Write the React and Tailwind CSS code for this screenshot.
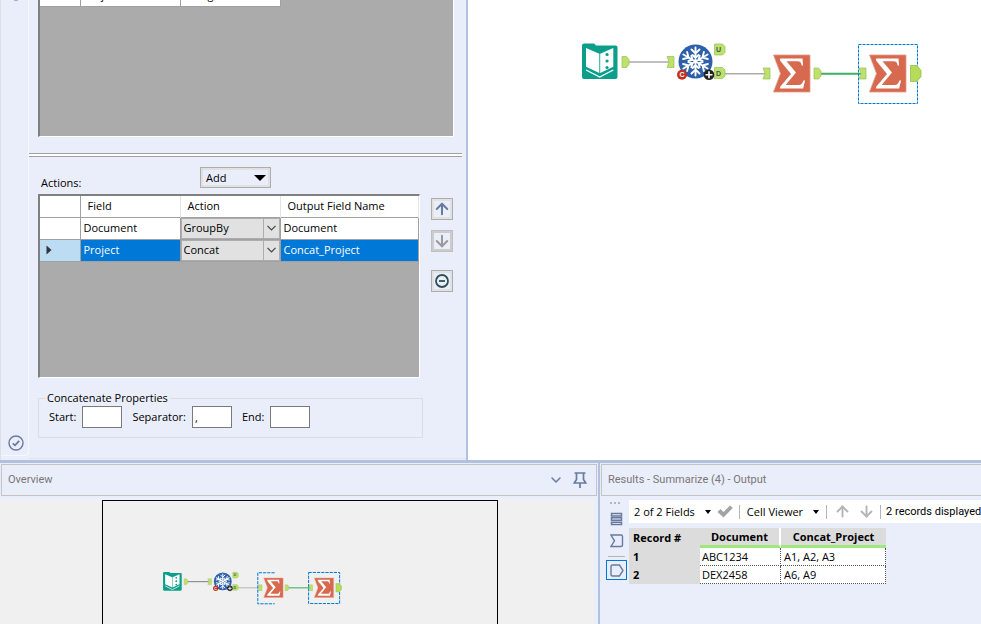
import { useState } from "react"
import { ArrowDown, ArrowUp, ChevronDown } from "lucide-react"

const actionRows = [
    { field: "Document", action: "GroupBy", output: "Document" },
    { field: "Project", action: "Concat", output: "Concat_Project" },
]

const results = [
    { document: "ABC1234", projects: "A1, A2, A3" },
    { document: "DEX2458", projects: "A6, A9" },
]

function SummarizeTool({ x }) {
    return (
        <g transform={`translate(${x} 19)`}>
            <path d="M0 0H36.5V37H0L7 18.5Z" fill="#d7694f" stroke="#e59a88" strokeWidth="0.8" />
            <path
                d="M6.5 3.5H29L29.6 10.5H28.2C27.6 7.5 26.8 6.300 24 6.300H13L22.500 17.500L12.200 30H25C28 30 29 28 30 25.5H31.6L29.6 33.5H6.5V32L17.5 19L6.5 5.5Z"
                fill="#fff"
            />
        </g>
    )
}

function OutAnchor({ x, y }) {
    return (
        <path
            d={`M${x} ${y}h4.5l2.5 3v5l-2.5 3h-4.5z`}
            fill="#bfe06a"
            stroke="#96c25a"
            strokeWidth="0.7"
        />
    )
}

function InAnchor({ x, y }) {
    return (
        <path
            d={`M${x} ${y}h7v11h-7l2 -5.5z`}
            fill="#bfe06a"
            stroke="#96c25a"
            strokeWidth="0.7"
        />
    )
}

function LetterAnchor({ y, letter }) {
    return (
        <g>
            <path
                d={`M138.500 ${y}h8l2.500 2.500v6l-2.500 2.500h-8z`}
                fill="#bfe06a"
                stroke="#96c25a"
                strokeWidth="0.7"
            />
            <text
                x="142.500"
                y={y + 8}
                textAnchor="middle"
                fontFamily="Liberation Sans, sans-serif"
                fontSize="7"
                fontWeight="700"
                fill="#2f5b56"
            >
                {letter}
            </text>
        </g>
    )
}

function Workflow({ className, wire, overview }) {
    return (
        <svg viewBox="0 0 350 76" className={className} fill="none">
            <path d="M53 26H93" stroke={wire} strokeWidth="1.600" />
            <path d="M149 37.700H189" stroke="#aaa" strokeWidth="1.600" />
            <path d="M244 37.700H286" stroke="#3fae66" strokeWidth="2" />

            {/* input data */}
            <path
                d="M6 9.500Q6 7.500 8 7.500H18L20 9.500H39.500Q41.500 9.500 41.500 11.500V41Q41.500 43 39.500 43H8Q6 43 6 41Z"
                fill="#0b9f8b"
            />
            <path d="M10 12L23.300 17.800V37L10 30.700ZM37.300 12L24.200 17.800V37L37.300 30.700Z" fill="#fff" />
            <path d="M11.500 33L23.700 39.300L36 33" stroke="#0b9f8b" strokeWidth="1.200" />
            <path d="M10 34L23.700 41L37.300 34" stroke="#fff" strokeWidth="1.400" />
            <path d="M31 18.500h.1M31 25h.1M31 31.500h.1" stroke="#0b9f8b" strokeWidth="3.200" strokeLinecap="round" />
            <OutAnchor x={46} y={20.5} />

            {/* data cleansing */}
            <InAnchor x={91} y={20.5} />
            <circle cx="119.500" cy="25.500" r="17" fill="#2d60a9" />
            <g stroke="#fff" strokeWidth="1.900" strokeLinecap="round">
                {[0, 60, 120, 180, 240, 300].map((angle) => (
                    <path
                        key={angle}
                        transform={`rotate(${angle} 119.500 25.500)`}
                        d="M119.500 25.500V11.500M115.500 13.500L119.500 17.500L123.500 13.500M116.500 19L119.500 22L122.500 19"
                    />
                ))}
            </g>
            <circle cx="106" cy="38.700" r="5" fill="#c3311f" />
            <text
                x="106"
                y="41.300"
                textAnchor="middle"
                fontFamily="Liberation Sans, sans-serif"
                fontSize="7"
                fontWeight="700"
                fill="#fff"
            >
                C
            </text>
            <LetterAnchor y={8} letter="U" />
            <LetterAnchor y={31.5} letter="D" />
            <circle cx="133" cy="38.700" r="5.300" fill="#222" />
            <path d="M133 35.200v7M129.500 38.700h7" stroke="#fff" strokeWidth="1.600" />

            <InAnchor x={187} y={32} />
            <SummarizeTool x={197.5} />
            <OutAnchor x={238} y={32} />

            {overview && (
                <path d="M218 9H186V68H218" stroke="#0078d7" strokeWidth="1.900" strokeDasharray="6 2" />
            )}
            <rect
                x="282.500"
                y="8.500"
                width="59"
                height="59"
                stroke="#0078d7"
                strokeWidth={overview ? 1.9 : 1}
                strokeDasharray={overview ? "6 2" : "3 1"}
            />
            <InAnchor x={283} y={32} />
            <SummarizeTool x={293.5} />
            <path d="M334.500 29.500h6.500l4 5v6l-4 5h-6.500z" fill="#b5db58" stroke="#8fbf52" strokeWidth="0.8" />
        </svg>
    )
}

function SideButton({ label, disabled, children }) {
    return (
        <button
            aria-label={label}
            disabled={disabled}
            className="w-[22px] h-[22px] flex items-center justify-center border border-[#adadad] bg-[#eaeefa] ring-2 ring-inset ring-[#e1e1e1] disabled:border-[#bfbfbf] disabled:ring-[#cccccc]"
        >
            {children}
        </button>
    )
}

function PropertyInput({ id, label, initial }) {
    const [value, setValue] = useState(initial)

    return (
        <div className="flex items-center gap-1.5">
            <label htmlFor={id}>{label}</label>
            <input
                id={id}
                value={value}
                onChange={(e) => setValue(e.target.value)}
                className="w-10 h-[22px] px-0.5 bg-white border border-[#7a7a7a]"
            />
        </div>
    )
}

function ActionsTable() {
    return (
        <table className="w-full table-fixed border-collapse text-left">
            <thead>
                <tr className="h-[21px] bg-white border-b border-[#a0a0a0]">
                    <th aria-label="Selected row" className="w-10 p-0 border-r border-[#a0a0a0]"></th>
                    <th className="w-[100px] p-0 pl-[7px] font-normal border-r border-[#e3e3e3]">Field</th>
                    <th className="w-[100px] p-0 pl-[7px] font-normal border-r border-[#e3e3e3]">Action</th>
                    <th className="p-0 pl-[7px] font-normal border-r border-[#e3e3e3]">Output Field Name</th>
                </tr>
            </thead>
            <tbody>
                {actionRows.map((row, i) => (
                    <tr
                        key={row.field}
                        className={
                            i === 1
                                ? "h-[22px] bg-[#0078d7] text-white border-b border-[#a0a0a0]"
                                : "h-[22px] bg-white border-b border-[#a0a0a0]"
                        }
                    >
                        <td className={i === 1 ? "p-0 pl-1.5 bg-[#bcdcf4] border-r border-[#a0a0a0]" : "p-0 border-r border-[#a0a0a0]"}>
                            {i === 1 && (
                                <svg viewBox="0 0 6 10" className="w-1.5 h-2.5">
                                    <path d="M0.500 0.500L5.500 5L0.500 9.500Z" fill="#333" />
                                </svg>
                            )}
                        </td>
                        <td className="p-0 pl-[3px] border-r border-[#a0a0a0]">{row.field}</td>
                        <td className="p-0 border-r border-[#a0a0a0]">
                            <div className="relative text-black">
                                <select
                                    aria-label={`Action for ${row.field}`}
                                    defaultValue={row.action}
                                    className="block w-full h-[21px] pl-0.5 appearance-none bg-[#e1e1e1] border border-[#adadad]"
                                >
                                    <option>GroupBy</option>
                                    <option>Concat</option>
                                </select>
                                <span className="absolute right-0 inset-y-0 w-[17px] flex items-center justify-center border-l border-[#adadad] pointer-events-none">
                                    <svg viewBox="0 0 9 6" className="w-[9px] h-1.5" fill="none" stroke="#444" strokeWidth="1.200">
                                        <path d="M0.500 0.800L4.500 4.800L8.500 0.800" />
                                    </svg>
                                </span>
                            </div>
                        </td>
                        <td className="p-0 pl-[3px] border-r border-[#a0a0a0]">{row.output}</td>
                    </tr>
                ))}
            </tbody>
        </table>
    )
}

function ConfigPanel() {
    return (
        <section className="w-[468px] shrink-0 flex border-l border-r-2 border-l-[#dcdfe6] border-r-[#b0c0e0]">
            <div className="w-7 shrink-0 flex flex-col items-center justify-between mb-1 pb-1 pl-[3px] border-r border-b border-[#f6f8fd] rounded-br">
                <span className="w-1 h-px bg-[#a9b3cc]"></span>
                <svg viewBox="0 0 16 16" className="w-4 h-4" fill="none" stroke="#687b9f" strokeWidth="1.400">
                    <circle cx="8" cy="8" r="7" />
                    <path d="M4.800 8.300L7 10.300L11.200 5.800" strokeWidth="1.800" />
                </svg>
            </div>

            <div className="flex-1 flex flex-col border-b border-[#e3e3e3] mb-px">
                <div className="h-[137px] ml-[9px] mr-3 bg-[#ababab] border-l-2 border-b border-r border-l-[#808080] border-b-white border-r-white">
                    <div className="h-[7px] flex items-end overflow-hidden">
                        <table className="table-fixed w-[241px] border-collapse bg-white">
                            <tbody>
                                <tr className="h-[22px] border-b border-[#a0a0a0]">
                                    <td className="w-10 p-0 border-r border-[#a0a0a0]"></td>
                                    <td className="w-[100px] p-0 pl-[3px] border-r border-[#a0a0a0]">Project</td>
                                    <td className="p-0 pl-[3px] border-r border-[#a0a0a0]">String</td>
                                </tr>
                            </tbody>
                        </table>
                    </div>
                </div>

                <div className="mt-4 mr-1 h-1 border-y border-[#a0a0a0] bg-white"></div>

                <div className="mt-2.5 ml-3 flex items-start">
                    <span className="w-[159px] pt-2">Actions:</span>
                    <button className="w-[71px] h-[21px] flex items-center justify-between pl-[5px] pr-1 border border-[#adadad] ring-2 ring-inset ring-[#e1e1e1]">
                        Add
                        <svg viewBox="0 0 12 6" className="w-3 h-1.5">
                            <path d="M0 0H12L6 6Z" />
                        </svg>
                    </button>
                </div>

                <div className="mt-[3px] ml-[9px] flex gap-[11px]">
                    <div className="w-[382px] h-[184px] bg-[#ababab] border-t-2 border-l-2 border-b border-r border-t-[#808080] border-l-[#808080] border-r-white border-b-white">
                        <ActionsTable />
                    </div>
                    <div className="flex flex-col gap-2.5 pt-1">
                        <SideButton label="Move up">
                            <ArrowUp size={18} strokeWidth={2.7} color="#687b9f" />
                        </SideButton>
                        <SideButton label="Move down" disabled>
                            <ArrowDown size={18} strokeWidth={2.7} color="#9a9a9a" />
                        </SideButton>
                        <div className="pt-2">
                            <SideButton label="Remove">
                                <svg viewBox="0 0 14 14" className="w-3.5 h-3.5" fill="none" stroke="#2f4f56" strokeWidth="1.800">
                                    <circle cx="7" cy="7" r="6" />
                                    <path d="M4 7H10" />
                                </svg>
                            </SideButton>
                        </div>
                    </div>
                </div>

                <fieldset className="mt-3 ml-[9px] w-[385px] h-12 px-2.5 border border-[#dcdcdc]">
                    <legend className="-ml-1 px-0.5 leading-4">Concatenate Properties</legend>
                    <div className="flex gap-2.5">
                        <PropertyInput id="start" label="Start:" initial="" />
                        <PropertyInput id="separator" label="Separator:" initial="," />
                        <PropertyInput id="end" label="End:" initial="" />
                    </div>
                </fieldset>
                <div className="h-5"></div>
            </div>
        </section>
    )
}

function Overview() {
    return (
        <section className="w-[600px] shrink-0 flex flex-col pt-px border-r-2 border-[#b0c0e0]">
            <header className="h-8 ml-px mr-px flex items-center gap-2 pl-1.5 pr-2 border border-[#c3c3c3]">
                <h2 className="flex-1 font-['Roboto',sans-serif] text-[#777]">Overview</h2>
                <button aria-label="Panel options">
                    <ChevronDown size={16} strokeWidth={2.2} color="#687b9f" />
                </button>
                <button aria-label="Pin panel">
                    <svg viewBox="0 0 16 18" className="w-4 h-[18px]" fill="none" stroke="#687b9f" strokeWidth="1.700">
                        <path d="M2.500 2H13.500M4.500 2V8.500L2.300 12H13.700L11.500 8.500V2M8 12V17" />
                    </svg>
                </button>
            </header>
            <div className="mt-[3px] mr-1 flex-1 bg-[#f0f0f0] pt-px pl-1.5 flex justify-center">
                <div className="relative w-[396px] border border-b-0 border-black">
                    <Workflow overview wire="#666" className="absolute left-14 top-[67px] w-[186px] h-10" />
                </div>
            </div>
        </section>
    )
}

function Results() {
    return (
        <section className="flex-1 min-w-0 flex flex-col pt-px">
            <header className="h-8 ml-px shrink-0 flex items-center pl-1.5 border border-r-0 border-[#c3c3c3]">
                <h2 className="font-['Roboto',sans-serif] text-[#777]">Results - Summarize (4) - Output</h2>
            </header>
            <div className="flex-1 flex pl-1.5 pt-1">
                <div className="w-[23px] shrink-0 flex flex-col items-start">
                    <span className="ml-1 mt-0.5 flex gap-0.5">
                        <i className="w-0.5 h-0.5 bg-[#b5b5b5]"></i>
                        <i className="w-0.5 h-0.5 bg-[#b5b5b5]"></i>
                        <i className="w-0.5 h-0.5 bg-[#b5b5b5]"></i>
                    </span>
                    <button aria-label="Messages" className="ml-1 mt-2">
                        <svg viewBox="0 0 13 14" className="block w-[13px] h-3.5" fill="none" stroke="#687b9f" strokeWidth="1.500">
                            <path d="M1.500 1.500H11.500V4H1.500ZM1.500 5.800H11.500V8.300H1.500ZM1.500 10.200H11.500V12.500H1.500Z" />
                        </svg>
                    </button>
                    <button aria-label="Input anchor" className="ml-1 mt-2">
                        <svg viewBox="0 0 14 14" className="block w-3.5 h-3.5" fill="none" stroke="#687b9f" strokeWidth="1.400">
                            <path d="M1 1H11Q12.500 1 12.500 2.500V11Q12.500 12.500 11 12.500H1L4.500 6.800Z" />
                        </svg>
                    </button>
                    <span className="ml-0.5 mt-2 w-[17px] h-px bg-[#b5b5b5]"></span>
                    <button
                        aria-label="Output anchor"
                        className="mt-[3px] w-[21px] h-5 flex items-center justify-center border border-[#0078d7]"
                    >
                        <svg viewBox="0 0 14 13" className="w-3.5 h-[13px]" fill="none" stroke="#687b9f" strokeWidth="1.400">
                            <path d="M2.500 1H9.500L13 6.500L9.500 12H2.500Q1 12 1 10.500V2.500Q1 1 2.500 1Z" />
                        </svg>
                    </button>
                </div>

                <div className="flex-1 min-w-0 text-black">
                    <div className="h-[23px] flex items-center pl-[5px] bg-white whitespace-nowrap overflow-hidden">
                        <button className="flex items-center gap-2.5">
                            2 of 2 Fields
                            <svg viewBox="0 0 6 4" className="w-1.5 h-1">
                                <path d="M0 0H6L3 4Z" />
                            </svg>
                        </button>
                        <button aria-label="Apply" className="ml-1.5">
                            <svg viewBox="0 0 16 13" className="w-4 h-[13px]">
                                <path d="M0.500 7L3.500 4L6.500 7L13 0.500L15.800 3L6.500 12.500Z" fill="#a3a3a3" />
                            </svg>
                        </button>
                        <span className="ml-1.5 mr-[7px] w-px h-3.5 shrink-0 bg-[#b5b5b5]"></span>
                        <button className="flex items-center gap-2.5">
                            Cell Viewer
                            <svg viewBox="0 0 6 4" className="w-1.5 h-1">
                                <path d="M0 0H6L3 4Z" />
                            </svg>
                        </button>
                        <span className="mx-[7px] w-px h-3.5 shrink-0 bg-[#b5b5b5]"></span>
                        <button aria-label="Previous record">
                            <ArrowUp size={17} strokeWidth={2.7} color="#b5b5b5" />
                        </button>
                        <button aria-label="Next record" className="ml-[7px]">
                            <ArrowDown size={17} strokeWidth={2.7} color="#b5b5b5" />
                        </button>
                        <span className="mx-[5px] w-px h-3.5 shrink-0 bg-[#b5b5b5]"></span>
                        <span className="font-['Roboto',sans-serif]">2 records displayed</span>
                    </div>

                    <table className="mt-[5px] w-[257px] table-fixed border-separate border-spacing-0 text-left">
                        <thead>
                            <tr className="h-5">
                                <th className="w-[71px] p-0 pl-1 bg-[#dcdcdc]">Record #</th>
                                <th className="w-[81px] p-0 text-center bg-[#dcdcdc] border-b-3 border-b-[#9fe87c] border-r-2 border-r-white">
                                    Document
                                </th>
                                <th className="p-0 text-center bg-[#dcdcdc] border-b-3 border-b-[#9fe87c]">Concat_Project</th>
                            </tr>
                        </thead>
                        <tbody>
                            {results.map((row, i) => (
                                <tr key={row.document} className="h-[18px] bg-white">
                                    <th className="p-0 pl-1 bg-[#dcdcdc]">{i + 1}</th>
                                    <td className="p-0 pl-0.5 border-r border-b border-dotted border-[#555]">{row.document}</td>
                                    <td className="p-0 pl-[3px] border-r border-b border-dotted border-[#555]">{row.projects}</td>
                                </tr>
                            ))}
                        </tbody>
                    </table>
                </div>
            </div>
        </section>
    )
}

export default function App() {
    return (
        <div className="h-screen flex flex-col overflow-hidden bg-[#eaeefa] font-['Open_Sans',sans-serif] text-[11px] leading-4 text-black">
            <div className="shrink-0 flex border-b-3 border-[#b0c0e0]">
                <ConfigPanel />
                <main className="relative flex-1 bg-white overflow-hidden">
                    <Workflow wire="#aaa" className="absolute left-27 top-9 w-[350px] h-[76px]" />
                </main>
            </div>
            <div className="flex-1 min-h-0 flex">
                <Overview />
                <Results />
            </div>
        </div>
    )
}
